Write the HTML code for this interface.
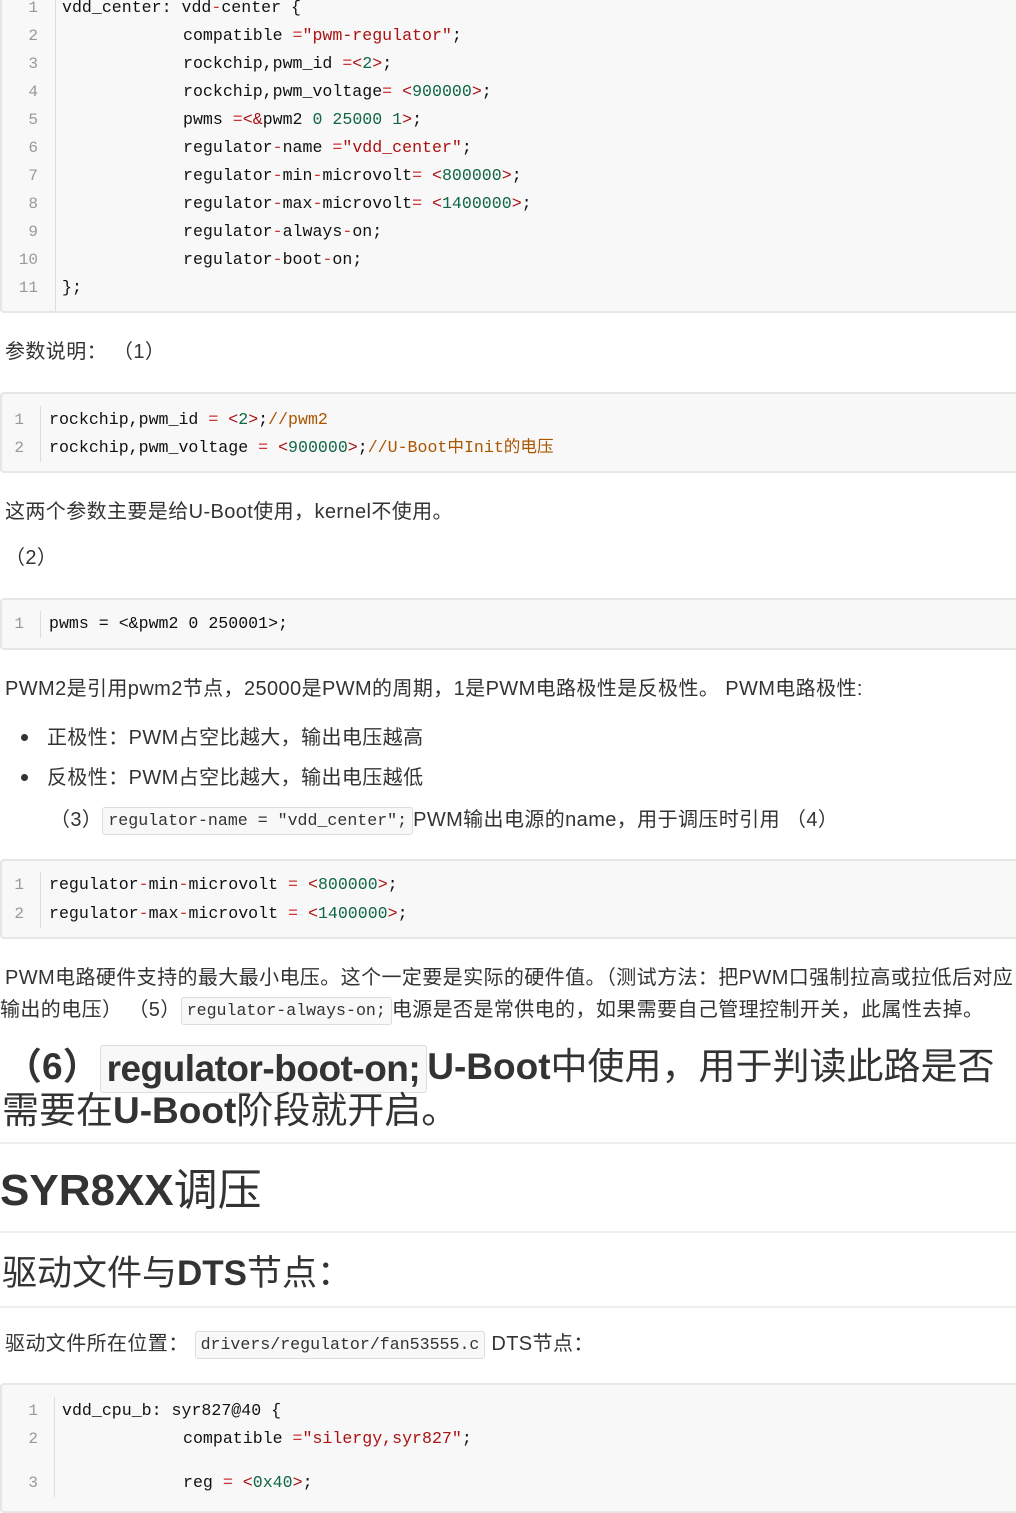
<!DOCTYPE html>
<html><head><meta charset="utf-8"><style>
*{margin:0;padding:0;box-sizing:border-box}
body{width:1016px;height:1493px;background:#fff;position:relative;overflow:hidden;font-family:"Liberation Sans","Noto Sans CJK SC",sans-serif;color:#333}
.blk{position:absolute;left:0;width:1030px;background:#f8f8f8;border:2px solid #e6e6e6;border-radius:4px}
.gut{position:absolute;top:0;bottom:0;border-right:1px solid #ddd}
.l{position:absolute;white-space:pre;font-family:"Liberation Mono","Noto Sans CJK SC",monospace;font-size:16.6px;line-height:28px;height:28px;color:#111}
.n{position:absolute;font-family:"Liberation Mono",monospace;font-size:16px;line-height:28px;color:#999;text-align:right}
.t{position:absolute;white-space:nowrap;font-size:20px;line-height:30px;color:#333;letter-spacing:0.4px}
.h{letter-spacing:0}
.s{color:#a11}.g{color:#164}.o{color:#c33}.c{color:#a50}
.ic{display:inline-block;background:#f8f8f8;border:1px solid #ddd;border-radius:3px;font-family:"Liberation Mono",monospace;font-size:16.6px;line-height:26px;padding:0 5px;vertical-align:middle;color:#333;letter-spacing:0}
.hr{position:absolute;left:0;width:1016px;height:2px;background:#eee}
</style></head><body>

<div class="blk" style="top:-10px;height:323px">
<div class="gut" style="left:0;width:54px"></div>
</div>
<div class="n" style="left:0;width:38px;top:-6px">1</div>
<div class="n" style="left:0;width:38px;top:22px">2</div>
<div class="n" style="left:0;width:38px;top:50px">3</div>
<div class="n" style="left:0;width:38px;top:78px">4</div>
<div class="n" style="left:0;width:38px;top:106px">5</div>
<div class="n" style="left:0;width:38px;top:134px">6</div>
<div class="n" style="left:0;width:38px;top:162px">7</div>
<div class="n" style="left:0;width:38px;top:190px">8</div>
<div class="n" style="left:0;width:38px;top:218px">9</div>
<div class="n" style="left:0;width:38px;top:246px">10</div>
<div class="n" style="left:0;width:38px;top:274px">11</div>
<div class="l" style="left:62px;top:-6px">vdd_center: vdd<span class="o">-</span>center {</div>
<div class="l" style="left:183px;top:22px">compatible <span class="o">=</span><span class="s">"pwm-regulator"</span>;</div>
<div class="l" style="left:183px;top:50px">rockchip,pwm_id <span class="o">=</span><span class="s">&lt;</span><span class="g">2</span><span class="s">&gt;</span>;</div>
<div class="l" style="left:183px;top:78px">rockchip,pwm_voltage<span class="o">=</span> <span class="s">&lt;</span><span class="g">900000</span><span class="s">&gt;</span>;</div>
<div class="l" style="left:183px;top:106px">pwms <span class="o">=</span><span class="s">&lt;&amp;</span>pwm2 <span class="g">0 25000 1</span><span class="s">&gt;</span>;</div>
<div class="l" style="left:183px;top:134px">regulator<span class="o">-</span>name <span class="o">=</span><span class="s">"vdd_center"</span>;</div>
<div class="l" style="left:183px;top:162px">regulator<span class="o">-</span>min<span class="o">-</span>microvolt<span class="o">=</span> <span class="s">&lt;</span><span class="g">800000</span><span class="s">&gt;</span>;</div>
<div class="l" style="left:183px;top:190px">regulator<span class="o">-</span>max<span class="o">-</span>microvolt<span class="o">=</span> <span class="s">&lt;</span><span class="g">1400000</span><span class="s">&gt;</span>;</div>
<div class="l" style="left:183px;top:218px">regulator<span class="o">-</span>always<span class="o">-</span>on;</div>
<div class="l" style="left:183px;top:246px">regulator<span class="o">-</span>boot<span class="o">-</span>on;</div>
<div class="l" style="left:62px;top:274px">};</div>

<div class="t" style="left:5px;top:337px">参数说明： （1）</div>

<div class="blk" style="top:392px;height:81px"></div>
<div style="position:absolute;left:40px;top:406px;height:56px;border-left:1px solid #ddd"></div>
<div class="n" style="left:0;width:24px;top:406px">1</div>
<div class="n" style="left:0;width:24px;top:434px">2</div>
<div class="l" style="left:49px;top:406px">rockchip,pwm_id <span class="o">=</span> <span class="s">&lt;</span><span class="g">2</span><span class="s">&gt;</span>;<span class="c">//pwm2</span></div>
<div class="l" style="left:49px;top:434px">rockchip,pwm_voltage <span class="o">=</span> <span class="s">&lt;</span><span class="g">900000</span><span class="s">&gt;</span>;<span class="c">//U-Boot中Init的电压</span></div>

<div class="t" style="left:5px;top:497px">这两个参数主要是给U-Boot使用，kernel不使用。</div>
<div class="t" style="left:5px;top:543px">（2）</div>

<div class="blk" style="top:598px;height:52px"></div>
<div style="position:absolute;left:40px;top:611px;height:27px;border-left:1px solid #ddd"></div>
<div class="n" style="left:0;width:24px;top:610px">1</div>
<div class="l" style="left:49px;top:610px">pwms = &lt;&amp;pwm2 0 250001&gt;;</div>

<div class="t" style="left:5px;top:674px">PWM2是引用pwm2节点，25000是PWM的周期，1是PWM电路极性是反极性。 PWM电路极性:</div>
<div style="position:absolute;left:21px;top:734px;width:7px;height:7px;border-radius:50%;background:#333"></div>
<div class="t" style="left:47px;top:723px">正极性：PWM占空比越大，输出电压越高</div>
<div style="position:absolute;left:21px;top:774px;width:7px;height:7px;border-radius:50%;background:#333"></div>
<div class="t" style="left:47px;top:763px">反极性：PWM占空比越大，输出电压越低</div>
<div class="t" style="left:50px;top:805px">（3）<span class="ic">regulator-name = "vdd_center";</span>PWM输出电源的name，用于调压时引用 （4）</div>

<div class="blk" style="top:859px;height:80px"></div>
<div style="position:absolute;left:40px;top:872px;height:56px;border-left:1px solid #ddd"></div>
<div class="n" style="left:0;width:24px;top:871px">1</div>
<div class="n" style="left:0;width:24px;top:900px">2</div>
<div class="l" style="left:49px;top:871px">regulator<span class="o">-</span>min<span class="o">-</span>microvolt <span class="o">=</span> <span class="s">&lt;</span><span class="g">800000</span><span class="s">&gt;</span>;</div>
<div class="l" style="left:49px;top:900px">regulator<span class="o">-</span>max<span class="o">-</span>microvolt <span class="o">=</span> <span class="s">&lt;</span><span class="g">1400000</span><span class="s">&gt;</span>;</div>

<div class="t" style="left:5px;top:963px">PWM电路硬件支持的最大最小电压。这个一定要是实际的硬件值。（测试方法：把PWM口强制拉高或拉低后对应</div>
<div class="t" style="left:0;top:995px">输出的电压） （5）<span class="ic">regulator-always-on;</span>电源是否是常供电的，如果需要自己管理控制开关，此属性去掉。</div>

<div class="t h" style="left:5px;top:1043px;font-size:37px;line-height:48px;color:#333"><b>（6）</b><span style="display:inline-block;background:#f8f8f8;border:1px solid #ddd;border-radius:3px;padding:0 6px;line-height:46px;font-weight:bold;vertical-align:middle;letter-spacing:-0.5px">regulator-boot-on;</span><b>U-Boot</b>中使用，用于判读此路是否</div>
<div class="t h" style="left:2px;top:1087px;font-size:37px;line-height:48px">需要在<b>U-Boot</b>阶段就开启。</div>
<div class="hr" style="top:1142px"></div>

<div class="t h" style="left:0;top:1163px;font-size:44px;line-height:56px;color:#333"><b>SYR8XX</b>调压</div>
<div class="hr" style="top:1231px"></div>

<div class="t h" style="left:2px;top:1252px;font-size:35px;line-height:44px">驱动文件与<b>DTS</b>节点：</div>
<div class="hr" style="top:1306px"></div>

<div class="t" style="left:5px;top:1329px">驱动文件所在位置： <span class="ic">drivers/regulator/fan53555.c</span> DTS节点：</div>

<div class="blk" style="top:1383px;height:130px">
</div>
<div style="position:absolute;left:54px;top:1397px;height:100px;border-left:1px solid #ddd"></div>
<div class="n" style="left:0;width:38px;top:1397px">1</div>
<div class="n" style="left:0;width:38px;top:1425px">2</div>
<div class="n" style="left:0;width:38px;top:1469px">3</div>
<div class="l" style="left:62px;top:1397px">vdd_cpu_b: syr827@40 {</div>
<div class="l" style="left:183px;top:1425px">compatible <span class="o">=</span><span class="s">"silergy,syr827"</span>;</div>
<div class="l" style="left:183px;top:1469px">reg <span class="o">=</span> <span class="s">&lt;</span><span class="g">0x40</span><span class="s">&gt;</span>;</div>
</body></html>
